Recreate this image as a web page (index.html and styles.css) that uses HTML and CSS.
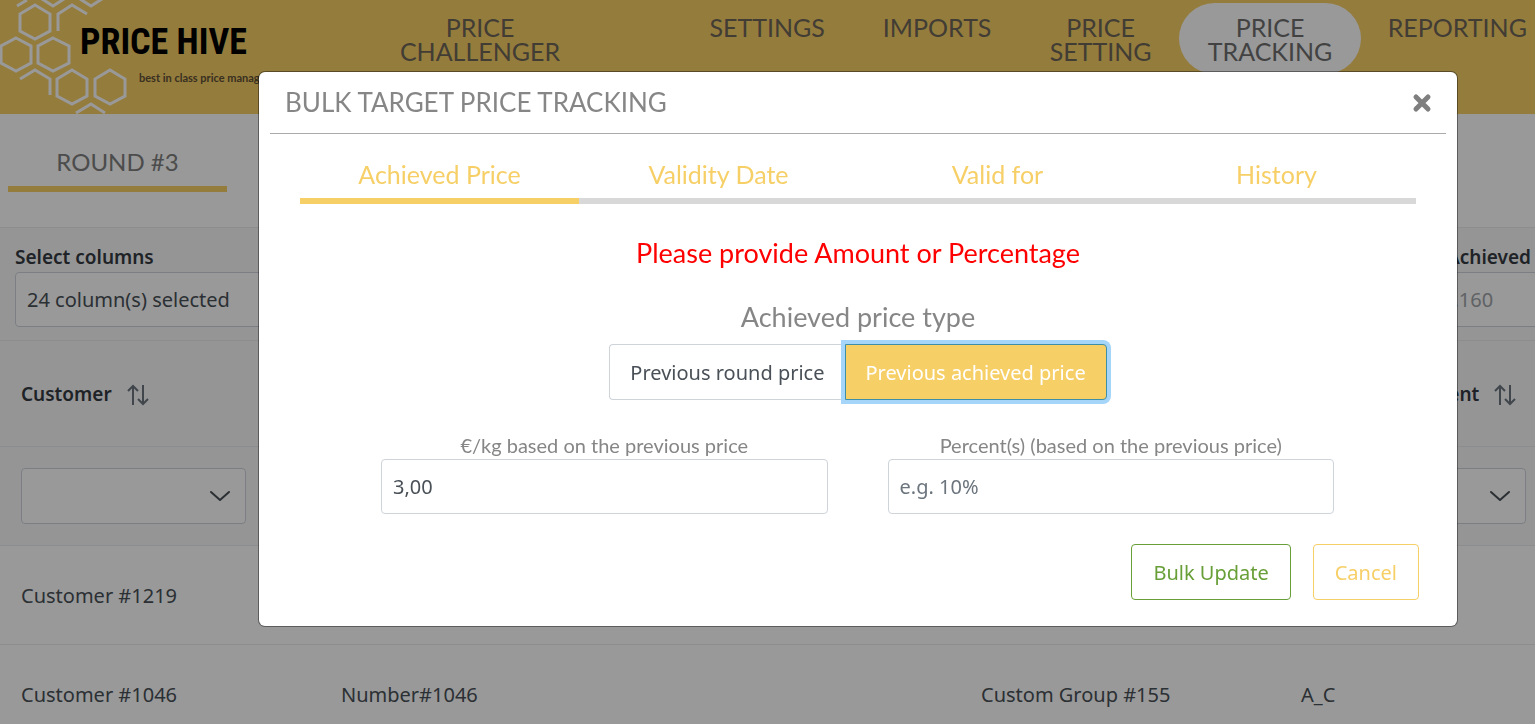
FILE: index.html
```html
<!DOCTYPE html>
<html lang="en">
<head>
    <meta charset="UTF-8">
    <meta name="viewport" content="width=device-width, initial-scale=1.0">
    <title>Price Hive - Price Tracking</title>
    <link rel="stylesheet" href="styles.css">
</head>
<body>

    <header class="top-bar">
        <a class="logo" href="#">
            <svg class="logo-hive" viewBox="0 0 127 114" width="127" height="114" aria-hidden="true">
                <g fill="none" stroke="#fff" stroke-width="3">
                    <path d="M17 6L27 0M42 -1L53 6L64 -1M80 -1L91 6L102 -1"/>
                    <path d="M35 5L50 14V31L35 39L20 31V14Z"/>
                    <path d="M58 31V14L72 5L87 14"/>
                    <path d="M16 38L31 46V63L16 71L1 63V46Z"/>
                    <path d="M53 38L69 46V63L53 71L38 63V46Z"/>
                    <path d="M20 79L35 70L50 79V95"/>
                    <path d="M72 70L87 79V96L72 104L57 96V79Z"/>
                    <path d="M110 70L125 79V96L110 104L95 96V79Z"/>
                    <path d="M76 113L91 104L105 113"/>
                </g>
            </svg>
            <span class="logo-words">
                <span class="logo-name">PRICE HIVE</span>
                <span class="logo-tagline">best in class price management</span>
            </span>
        </a>
        <a class="nav-link" href="#">PRICE CHALLENGER</a>
        <a class="nav-link nav-settings" href="#">SETTINGS</a>
        <a class="nav-link" href="#">IMPORTS</a>
        <a class="nav-link" href="#">PRICE SETTING</a>
        <a class="nav-link active" href="#">PRICE TRACKING</a>
        <a class="nav-link nav-reporting" href="#">REPORTING</a>
    </header>

    <main>
        <nav class="rounds">
            <a class="round active" href="#">ROUND #3</a>
        </nav>

        <div class="toolbar">
            <div class="toolbar-field columns-field">
                <label for="columns">Select columns</label>
                <select class="control" id="columns">
                    <option>24 column(s) selected</option>
                </select>
            </div>
            <div class="toolbar-field achieved-field">
                <label for="achieved">Achieved</label>
                <input class="control" id="achieved" type="text" placeholder="0.160">
            </div>
        </div>

        <table class="prices">
            <thead>
                <tr class="heads">
                    <th>Customer
                        <svg class="sort" viewBox="0 0 22 22" width="22" height="22" aria-hidden="true">
                            <path d="M6 21V2M1 7L6 2L11 7M16 1V20M11 15L16 20L21 15" fill="none" stroke="#6c757d" stroke-width="2"/>
                        </svg>
                    </th>
                    <th></th>
                    <th></th>
                    <th></th>
                    <th>Customer Segment
                        <svg class="sort" viewBox="0 0 22 22" width="22" height="22" aria-hidden="true">
                            <path d="M6 21V2M1 7L6 2L11 7M16 1V20M11 15L16 20L21 15" fill="none" stroke="#6c757d" stroke-width="2"/>
                        </svg>
                    </th>
                </tr>
                <tr class="filters">
                    <td>
                        <div class="filter">
                            <select class="control" aria-label="Customer"></select>
                            <svg class="chevron" viewBox="0 0 20 12" width="20" height="12" aria-hidden="true">
                                <path d="M1 2L10 10L19 2" fill="none" stroke="#495057" stroke-width="2" stroke-linecap="round" stroke-linejoin="round"/>
                            </svg>
                        </div>
                    </td>
                    <td></td>
                    <td></td>
                    <td></td>
                    <td>
                        <div class="filter">
                            <select class="control" aria-label="Customer Segment"></select>
                            <svg class="chevron" viewBox="0 0 20 12" width="20" height="12" aria-hidden="true">
                                <path d="M1 2L10 10L19 2" fill="none" stroke="#495057" stroke-width="2" stroke-linecap="round" stroke-linejoin="round"/>
                            </svg>
                        </div>
                    </td>
                </tr>
            </thead>
            <tbody>
                <tr>
                    <td>Customer #1219</td>
                    <td></td>
                    <td></td>
                    <td></td>
                    <td></td>
                </tr>
                <tr>
                    <td>Customer #1046</td>
                    <td>Number#1046</td>
                    <td></td>
                    <td>Custom Group #155</td>
                    <td>A_C</td>
                </tr>
            </tbody>
        </table>
    </main>

    <div class="overlay">
        <form class="modal" role="dialog" aria-labelledby="modal-title">
            <div class="modal-header">
                <h1 id="modal-title">BULK TARGET PRICE TRACKING</h1>
                <button class="close" type="button" aria-label="Close">
                    <svg viewBox="0 0 20 20" width="20" height="20" aria-hidden="true">
                        <path d="M4 4L16 16M16 4L4 16" fill="none" stroke="#7f7f7f" stroke-width="5" stroke-linecap="round"/>
                    </svg>
                </button>
            </div>

            <div class="tabs">
                <a class="tab active" href="#">Achieved Price</a>
                <a class="tab" href="#">Validity Date</a>
                <a class="tab" href="#">Valid for</a>
                <a class="tab" href="#">History</a>
            </div>

            <p class="error">Please provide Amount or Percentage</p>

            <h2>Achieved price type</h2>
            <div class="price-type">
                <button class="btn" type="button">Previous round price</button>
                <button class="btn selected" type="button">Previous achieved price</button>
            </div>

            <div class="fields">
                <div class="field">
                    <label for="amount">€/kg based on the previous price</label>
                    <input class="control" id="amount" type="text" value="3,00">
                </div>
                <div class="field">
                    <label for="percent">Percent(s) (based on the previous price)</label>
                    <input class="control" id="percent" type="text" placeholder="e.g. 10%">
                </div>
            </div>

            <div class="actions">
                <button class="btn update" type="submit">Bulk Update</button>
                <button class="btn cancel" type="button">Cancel</button>
            </div>
        </form>
    </div>

</body>
</html>
```
FILE: styles.css
```css
* {
    box-sizing: border-box;
}
body {
    margin: 0;
    overflow: hidden;
    background-color: white;
    color: #495057;
    font-family: "Noto Sans", sans-serif;
    font-size: 20px;
}
a {
    color: inherit;
    text-decoration: none;
}
h1, h2, p {
    margin: 0;
    font-weight: normal;
}
button, input, select {
    font: inherit;
    color: inherit;
}

/* header */
.top-bar {
    display: grid;
    grid-template-columns: 380fr 200fr 102fr 170fr 170fr 157fr 182fr 174fr;
    align-items: start;
    height: 114px;
    background-color: #f7cf67;
}
.logo {
    display: flex;
    color: black;
}
.logo-hive {
    flex: none;
    margin-right: -47px;
}
.logo-words {
    display: flex;
    flex-direction: column;
    padding-top: 20px;
    white-space: nowrap;
}
.logo-name {
    font-family: "Liberation Sans Narrow", "Roboto Condensed", "DejaVu Sans Condensed", sans-serif;
    font-size: 36px;
    font-weight: bold;
    line-height: 44px;
}
.logo-tagline {
    padding: 6px 0 0 59px;
    font-family: "Lato", sans-serif;
    font-size: 11px;
    font-weight: bold;
    line-height: 16px;
    color: #5f5035;
}
.nav-link {
    margin-top: 3px;
    padding: 12px 20px 11px;
    font-family: "Lato", sans-serif;
    font-size: 25px;
    line-height: 24px;
    text-align: center;
    color: #6f6657;
}
.nav-link.active {
    border-radius: 36px;
    background-color: white;
    color: #6f6f6f;
}
.nav-settings {
    grid-column: 4;
}
.nav-reporting {
    padding-right: 8px;
    text-align: right;
}

/* rounds */
.rounds {
    height: 113px;
    padding: 30px 8px 0;
}
.round {
    display: block;
    width: 219px;
    padding-bottom: 6px;
    border-bottom: 6px solid #f7cf67;
    font-family: "Lato", sans-serif;
    font-size: 24px;
    line-height: 36px;
    text-align: center;
    color: #7f7f7f;
}

/* toolbar */
.toolbar {
    display: flex;
    justify-content: space-between;
    padding: 14px 0 13px 15px;
    border-top: 1px solid #e9ecef;
    background-color: #f8f9fa;
}
.toolbar-field {
    display: flex;
    flex-direction: column;
}
.toolbar-field label {
    font-size: 19px;
    font-weight: 600;
    line-height: 30px;
    color: #343a40;
}
.columns-field {
    width: 30%;
}
.achieved-field {
    width: 105px;
}
.achieved-field label {
    padding-right: 4px;
    text-align: right;
}
.achieved-field .control {
    border-right: none;
    border-radius: 4px 0 0 4px;
}
.control {
    appearance: none;
    width: 100%;
    height: 55px;
    padding: 0 11px;
    border: 1px solid #ced4da;
    border-radius: 4px;
    background-color: white;
}
.control::placeholder {
    color: #6c757d;
    opacity: 1;
}
.achieved-field .control::placeholder {
    color: #a0a4a8;
}

/* table, wider than the window */
.prices {
    width: 1600px;
    table-layout: fixed;
    border-collapse: collapse;
}
.prices th,
.prices td {
    height: 99px;
    padding: 0 0 0 21px;
    border-top: 1px solid #e9ecef;
    text-align: left;
}
.prices thead {
    background-color: #f8f9fa;
}
.prices th {
    height: 106px;
    font-size: 19px;
    font-weight: 600;
    color: #343a40;
    white-space: nowrap;
}
.sort {
    margin-left: 10px;
    vertical-align: middle;
}
.filter {
    position: relative;
    width: 225px;
}
.filter .control {
    display: block;
    height: 56px;
}
.chevron {
    position: absolute;
    top: 22px;
    right: 16px;
    pointer-events: none;
}

/* modal */
.overlay {
    position: fixed;
    inset: 0;
    padding: 72px 78px 0 259px;
    background-color: rgba(0, 0, 0, 0.4);
}
.modal {
    padding: 0 11px 26px;
    border-radius: 6px;
    background-color: white;
    box-shadow: 0 0 0 1px rgba(0, 0, 0, 0.4);
    font-family: "Lato", sans-serif;
    color: #868686;
    text-align: center;
}
.modal-header {
    display: flex;
    justify-content: space-between;
    align-items: center;
    height: 62px;
    padding: 0 14px 0 15px;
    border-bottom: 1px solid #aaa;
}
.modal h1 {
    padding-bottom: 2px;
    font-size: 26px;
}
.close {
    display: flex;
    padding: 0;
    border: none;
    background: none;
}
.tabs {
    display: grid;
    grid-template-columns: repeat(4, 1fr);
    margin: 23px 30px 0;
}
.tab {
    padding-bottom: 7px;
    border-bottom: 6px solid #d8d8d8;
    font-size: 25px;
    line-height: 34px;
    color: #f7cf67;
}
.tab.active {
    border-color: #f7cf67;
}
.error {
    margin-top: 30px;
    font-size: 27px;
    line-height: 38px;
    color: #f00;
}
.modal h2 {
    margin-top: 26px;
    font-size: 27px;
    line-height: 38px;
}
.price-type {
    display: flex;
    justify-content: center;
    margin-top: 8px;
}
.btn {
    height: 56px;
    padding: 0 21px;
    border: 1px solid #ced4da;
    border-radius: 4px;
    background-color: white;
    font-family: "Noto Sans", sans-serif;
    font-size: 20px;
    color: #495057;
}
.price-type .btn {
    padding: 0 20px;
}
.price-type .btn:first-child {
    border-right: none;
    border-radius: 4px 0 0 4px;
}
.btn.selected {
    border-color: #3d8fa8;
    border-radius: 0 4px 4px 0;
    background-color: #f7cf67;
    box-shadow: 0 0 0 4px #a6d5fa;
    color: white;
}
.fields {
    display: grid;
    grid-template-columns: 1fr 1fr;
    gap: 60px;
    margin: 31px 112px 0 111px;
}
.field {
    display: flex;
    flex-direction: column;
}
.field label {
    font-size: 20px;
    line-height: 28px;
}
.field .control {
    font-family: "Noto Sans", sans-serif;
    color: #495057;
}
.field .control::placeholder {
    color: #6c757d;
}
.actions {
    display: flex;
    justify-content: flex-end;
    gap: 22px;
    margin: 30px 27px 0 0;
}
.btn.update {
    border-color: #689f38;
    color: #689f38;
}
.btn.cancel {
    border-color: #f7cf67;
    color: #f7cf67;
}
```
